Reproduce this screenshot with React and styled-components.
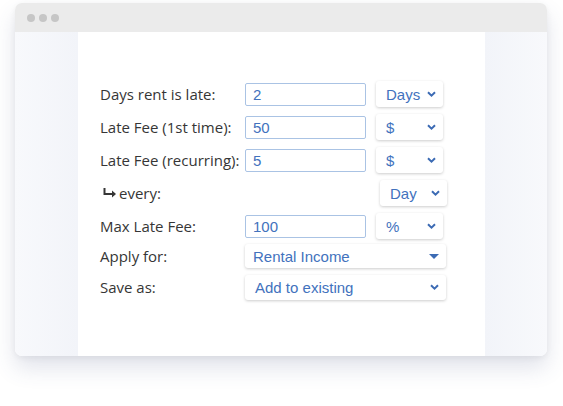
import styled, { createGlobalStyle } from "styled-components"

const Global = createGlobalStyle`
  html, body {
    margin: 0;
    background: #fff;
  }
`

const Page = styled.div`
  width: 563px;
  height: 406px;
  padding: 3px 0 0 15px;
  box-sizing: border-box;
`

const Window = styled.div`
  width: 532px;
  height: 353px;
  border-radius: 7px;
  overflow: hidden;
  display: flex;
  flex-direction: column;
  box-shadow: 0 12px 22px rgba(70, 80, 130, 0.16), 0 2px 6px rgba(0, 0, 0, 0.06);
`

const TitleBar = styled.div`
  height: 29px;
  flex-shrink: 0;
  background: #ebebeb;
  display: flex;
  align-items: center;
  gap: 4px;
  padding-left: 12px;
`

const Dot = styled.span`
  width: 8px;
  height: 8px;
  border-radius: 50%;
  background: #c6c6c6;
`

const Body = styled.div`
  flex: 1;
  display: flex;
`

const Side = styled.div`
  width: ${p => p.$w}px;
  background: linear-gradient(${p => (p.$right ? "270deg" : "90deg")}, #f8f9fc, #f2f4f9);
`

const Content = styled.div`
  flex: 1;
  background: #fff;
  padding: 48px 0 0 22px;
  font-family: "Open Sans", sans-serif;
`

const Row = styled.div`
  display: flex;
  align-items: center;
  height: 28px;
  margin-bottom: ${p => p.$gap ?? 5}px;
`

const Label = styled.div`
  width: 145px;
  flex-shrink: 0;
  font-size: 15px;
  color: #363636;
  display: flex;
  align-items: center;
  padding-left: ${p => (p.$indent ? 3 : 0)}px;
  box-sizing: border-box;
`

const Arrow = styled.svg`
  width: 14px;
  height: 10px;
  margin-right: 2px;
`

const Input = styled.div`
  width: 121px;
  height: 23px;
  box-sizing: border-box;
  border: 1px solid #aac3e4;
  border-radius: 2px;
  padding-left: 7px;
  display: flex;
  align-items: center;
  font-family: "Liberation Sans", Arial, sans-serif;
  font-size: 15px;
  color: #4272bd;
`

const Select = styled.div`
  width: ${p => p.$w}px;
  height: ${p => p.$h}px;
  margin-left: ${p => p.$ml}px;
  box-sizing: border-box;
  background: #fff;
  border-radius: 3px;
  box-shadow: 0 1px 3px rgba(0, 0, 0, 0.2);
  display: flex;
  align-items: center;
  justify-content: space-between;
  padding: 0 7px 0 ${p => p.$pl}px;
  font-family: "Liberation Sans", Arial, sans-serif;
  font-size: 15px;
  color: #4272bd;
`

const Chevron = () => (
  <svg width="9" height="6" viewBox="0 0 9 6">
    <path d="M1 1.2 L4.5 4.6 L8 1.2" fill="none" stroke="#3c6bb4" strokeWidth="2" />
  </svg>
)

const Caret = () => (
  <svg width="10" height="5" viewBox="0 0 10 5">
    <path d="M0 0 H10 L5 5 Z" fill="#3c6bb4" />
  </svg>
)

function SmallSelect({ value, ml = 10 }) {
  return (
    <Select $w={67} $h={26} $ml={ml} $pl={10}>
      <span>{value}</span>
      <Chevron />
    </Select>
  )
}

export default function App() {
  return (
    <Page>
      <Global />
      <Window>
        <TitleBar>
          <Dot />
          <Dot />
          <Dot />
        </TitleBar>
        <Body>
          <Side $w={63} />
          <Content>
            <Row>
              <Label>Days rent is late:</Label>
              <Input>2</Input>
              <SmallSelect value="Days" />
            </Row>
            <Row>
              <Label>Late Fee (1st time):</Label>
              <Input>50</Input>
              <SmallSelect value="$" />
            </Row>
            <Row>
              <Label>Late Fee (recurring):</Label>
              <Input>5</Input>
              <SmallSelect value="$" />
            </Row>
            <Row>
              <Label $indent>
                <Arrow viewBox="0 0 14 10">
                  <path d="M1.5 0 V6 H10" fill="none" stroke="#363636" strokeWidth="2" />
                  <path d="M9 2.5 L13 6 L9 9.5 Z" fill="#363636" />
                </Arrow>
                every:
              </Label>
              <SmallSelect value="Day" ml={135} />
            </Row>
            <Row $gap={2}>
              <Label>Max Late Fee:</Label>
              <Input>100</Input>
              <SmallSelect value="%" />
            </Row>
            <Row $gap={3}>
              <Label>Apply for:</Label>
              <Select $w={201} $h={24} $ml={0} $pl={8}>
                <span>Rental Income</span>
                <Caret />
              </Select>
            </Row>
            <Row>
              <Label>Save as:</Label>
              <Select $w={201} $h={25} $ml={0} $pl={10}>
                <span>Add to existing</span>
                <Chevron />
              </Select>
            </Row>
          </Content>
          <Side $w={62} $right />
        </Body>
      </Window>
    </Page>
  )
}
